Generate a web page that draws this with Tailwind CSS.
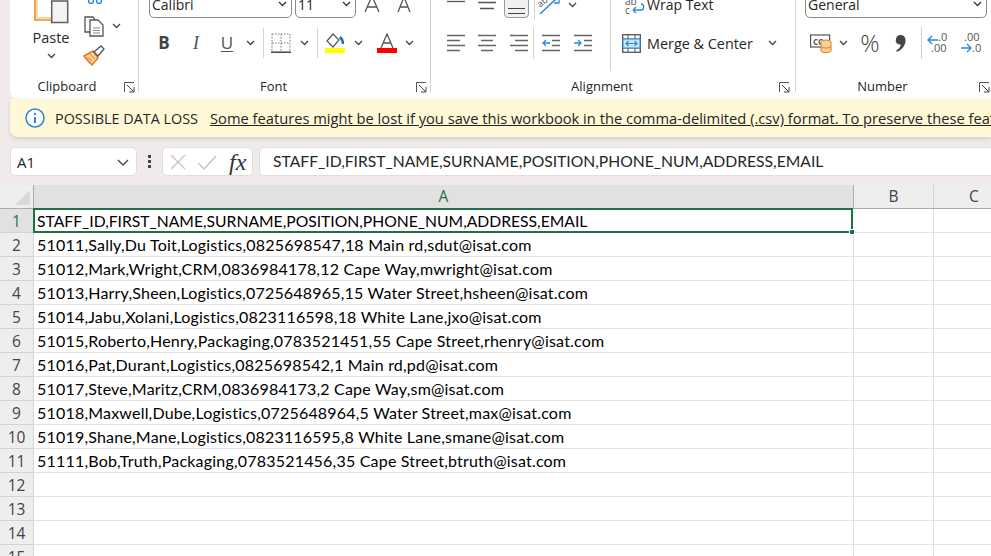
<!DOCTYPE html>
<html lang="en">
<head>
<meta charset="UTF-8">
<title>Excel</title>
<script src="https://cdn.jsdelivr.net/npm/@tailwindcss/browser@4"></script>
</head>
<body class="w-[991px] h-[556px] overflow-hidden bg-[#f0eaea] font-['Open_Sans',sans-serif] text-[#262626]">

<!-- Ribbon -->
<div class="ml-[10px] h-[99px] bg-white rounded-bl-[8px] flex overflow-hidden text-[13px]">

  <!-- Clipboard -->
  <section class="w-[129px] h-[92px] shrink-0 border-r border-[#d4d4d4] flex flex-col">
    <div class="h-[78px] shrink-0 flex">
      <div class="w-[34px] ml-[24px] flex flex-col items-center">
        <svg class="w-[36px] h-[24px] shrink-0" viewBox="0 0 36 24" fill="none"><path d="M2 0V20H18" stroke="#e8912d" stroke-width="1.6"/><path d="M4 0V18H18" stroke="#f9d9a8" stroke-width="2"/><rect x="18.7" y="1" width="16" height="21.5" fill="#f3f3f3" stroke="#5f5f5f" stroke-width="1.5"/></svg>
        <span class="mt-[5px] leading-[18px] text-[14.500px]">Paste</span>
        <svg class="w-[9px] h-[6px] mt-[6px]" viewBox="0 0 9 6" fill="none"><path d="M1 1l3.500 3.500L8 1" stroke="#444" stroke-width="1.300"/></svg>
      </div>
      <div class="ml-[15px] w-[44px] flex flex-col">
        <div class="h-[14px]">
          <svg class="w-[20px] h-[5px] ml-[2px]" viewBox="0 0 20 5" fill="none"><circle cx="6" cy="1" r="2.400" stroke="#2b88d8" stroke-width="1.400"/><circle cx="14" cy="1" r="2.400" stroke="#2b88d8" stroke-width="1.400"/></svg>
        </div>
        <div class="h-[24px] flex items-center">
          <svg class="w-[22px] h-[22px]" viewBox="0 0 22 22" fill="none"><path d="M7 17H2V2H10L12 5" stroke="#555" stroke-width="1.300"/><path d="M7 5H15L20 10V21H7Z" fill="#fff" stroke="#555" stroke-width="1.300"/><path d="M10 13h7M10 15.500h7M10 18h7" stroke="#888"/></svg>
          <svg class="w-[9px] h-[6px] ml-[7px]" viewBox="0 0 9 6" fill="none"><path d="M1 1l3.500 3.500L8 1" stroke="#444" stroke-width="1.300"/></svg>
        </div>
        <div class="mt-[7px]">
          <svg class="w-[22px] h-[21px]" viewBox="0 0 22 21" fill="none"><path d="M1 11L10 6L15 13L9 20C6 17 3 14 1 11Z" fill="#f9d3a5" stroke="#e07b16" stroke-width="1.500"/><path d="M4 12L9 16M7 9L12 14" stroke="#e07b16"/><path d="M11 7L18 1L21 4L15 11Z" fill="#fff" stroke="#555" stroke-width="1.300"/></svg>
        </div>
      </div>
    </div>
    <div class="flex items-center h-[18px] shrink-0 text-[13px]">
      <span class="flex-1 text-center">Clipboard</span>
      <svg class="w-[11px] h-[11px] mr-[3px]" viewBox="0 0 11 11" fill="none"><path d="M.5 10V.5H10" stroke="#555"/><path d="M3 3l7 7M10 5v5H5" stroke="#444"/></svg>
    </div>
  </section>

  <!-- Font -->
  <section class="w-[292px] h-[92px] shrink-0 border-r border-[#d4d4d4] flex flex-col">
    <div class="flex pl-[10px] h-[30px] shrink-0">
      <div class="w-[143px] h-[28px] -mt-[10px] border border-[#8a8a8a] rounded-[5px] flex items-center justify-between pl-[2px] pr-[4px] text-[14px]">Calibri
        <svg class="w-[9px] h-[6px]" viewBox="0 0 9 6" fill="none"><path d="M1 1l3.500 3.500L8 1" stroke="#333" stroke-width="1.300"/></svg>
      </div>
      <div class="w-[61px] h-[28px] -mt-[10px] ml-[3px] border border-[#8a8a8a] rounded-[5px] flex items-center justify-between pl-[2px] pr-[4px] text-[14px]">11
        <svg class="w-[9px] h-[6px]" viewBox="0 0 9 6" fill="none"><path d="M1 1l3.500 3.500L8 1" stroke="#333" stroke-width="1.300"/></svg>
      </div>
      <svg class="w-[16px] h-[12px] ml-[8px]" viewBox="0 0 16 12" fill="none"><path d="M1 12L8 -4L15 12M3.500 7H12.500" stroke="#555" stroke-width="1.300"/></svg>
      <svg class="w-[14px] h-[12px] ml-[17px]" viewBox="0 0 14 12" fill="none"><path d="M1 12L7 -3L13 12M3 7H11" stroke="#555" stroke-width="1.300"/></svg>
    </div>
    <div class="h-[26px] shrink-0 flex items-center">
      <b class="ml-[13px] w-[24px] text-center text-[17px] font-bold text-[#444]">B</b>
      <i class="ml-[8px] w-[24px] text-center text-[18px] font-['Liberation_Serif',serif] text-[#555]">I</i>
      <span class="ml-[7px] w-[24px] text-center text-[17px] underline underline-offset-[2px] text-[#555]">U</span>
      <svg class="w-[9px] h-[6px] ml-[7px] mr-[2px]" viewBox="0 0 9 6" fill="none"><path d="M1 1l3.500 3.500L8 1" stroke="#444" stroke-width="1.300"/></svg>
      <div class="ml-[6px] w-px h-[30px] bg-[#d4d4d4]"></div>
      <svg class="ml-[7px] w-[20px] h-[20px] mr-[1px]" viewBox="0 0 20 20" fill="none"><path d="M1 1H19M1 10H19M10 1V19M1 1V19M19 1V19" stroke="#777" stroke-dasharray="1.500 1.500"/><path d="M0 19.200H20" stroke="#444" stroke-width="1.500"/></svg>
      <svg class="w-[9px] h-[6px] ml-[8px] mr-[2px]" viewBox="0 0 9 6" fill="none"><path d="M1 1l3.500 3.500L8 1" stroke="#444" stroke-width="1.300"/></svg>
      <div class="ml-[6px] w-px h-[30px] bg-[#d4d4d4]"></div>
      <div class="ml-[7px] w-[20px] h-[21px] flex flex-col items-center">
        <svg class="w-[18px] h-[15px] shrink-0" viewBox="0 0 18 15" fill="none"><path d="M1 8L7 1L13 7L7 14Z" fill="#fff" stroke="#555" stroke-width="1.200"/><path d="M14 4C16 6 17 8 17 11" stroke="#1f6fc0" stroke-width="2.500"/></svg>
        <div class="w-[20px] h-[5px] shrink-0 bg-[#ffff00]"></div>
      </div>
      <svg class="w-[9px] h-[6px] ml-[9px]" viewBox="0 0 9 6" fill="none"><path d="M1 1l3.500 3.500L8 1" stroke="#444" stroke-width="1.300"/></svg>
      <div class="ml-[14px] w-[20px] h-[21px] flex flex-col items-center">
        <svg class="w-[14px] h-[15px] shrink-0" viewBox="0 0 14 15" fill="none"><path d="M1 15L7 1L13 15M3 10H11" stroke="#555" stroke-width="1.300"/></svg>
        <div class="w-[20px] h-[5px] shrink-0 bg-[#ff0000]"></div>
      </div>
      <svg class="w-[9px] h-[6px] ml-[8px]" viewBox="0 0 9 6" fill="none"><path d="M1 1l3.500 3.500L8 1" stroke="#444" stroke-width="1.300"/></svg>
    </div>
    <div class="flex items-center h-[18px] shrink-0 mt-[22px] text-[13px]">
      <span class="flex-1 text-center pr-[8px]">Font</span>
      <svg class="w-[11px] h-[11px] mr-[3px]" viewBox="0 0 11 11" fill="none"><path d="M.5 10V.5H10" stroke="#555"/><path d="M3 3l7 7M10 5v5H5" stroke="#444"/></svg>
    </div>
  </section>

  <!-- Alignment -->
  <section class="w-[365px] h-[92px] shrink-0 border-r border-[#d4d4d4] flex flex-col">
    <div class="h-[78px] shrink-0 flex items-start">
      <div class="w-[180px] h-[71px] border-r border-[#d4d4d4] flex flex-col">
        <div class="h-[30px] shrink-0 flex items-start">
          <svg class="ml-[16px] w-[18px] h-[10px]" viewBox="0 0 18 10" fill="none"><path d="M0 1.500H18" stroke="#555" stroke-width="1.300"/></svg>
          <svg class="ml-[13px] w-[18px] h-[12px]" viewBox="0 0 18 12" fill="none"><path d="M0 2.500H18M2 8.500H16" stroke="#555" stroke-width="1.300"/></svg>
          <div class="ml-[8px] w-[25px] h-[28px] -mt-[10px] bg-[#f0f0f0] border border-[#9a9a9a] rounded-[4px] flex flex-col items-center justify-end gap-[4px] pb-[3px]">
            <div class="w-[17px] h-px bg-[#444]"></div><div class="w-[17px] h-px bg-[#444]"></div>
          </div>
          <div class="ml-[5px] w-px h-[20px] bg-[#d4d4d4]"></div>
          <svg class="ml-[3px] w-[22px] h-[14px]" viewBox="0 0 22 14" fill="none"><path d="M2 14L20 -3" stroke="#2b88d8" stroke-width="1.500"/><path d="M16 3H21V-2" stroke="#2b88d8" stroke-width="1.300"/><text x="1" y="6" font-size="9" fill="#555" transform="rotate(-40 4 5)">ab</text></svg>
          <svg class="w-[9px] h-[6px] ml-[8px] mt-[2px]" viewBox="0 0 9 6" fill="none"><path d="M1 1l3.500 3.500L8 1" stroke="#444" stroke-width="1.300"/></svg>
        </div>
        <div class="h-[26px] shrink-0 flex items-center">
          <svg class="ml-[16px] w-[18px] h-[18px]" viewBox="0 0 18 18" fill="none"><path d="M0 1.500H18M0 6.500H13M0 11.500H18M0 16.500H13" stroke="#666" stroke-width="1.300"/></svg>
          <svg class="ml-[13px] w-[18px] h-[18px]" viewBox="0 0 18 18" fill="none"><path d="M0 1.500H18M3 6.500H15M0 11.500H18M3 16.500H15" stroke="#666" stroke-width="1.300"/></svg>
          <svg class="ml-[14px] w-[18px] h-[18px]" viewBox="0 0 18 18" fill="none"><path d="M0 1.500H18M5 6.500H18M0 11.500H18M5 16.500H18" stroke="#666" stroke-width="1.300"/></svg>
          <div class="ml-[5px] w-px h-[32px] bg-[#d4d4d4]"></div>
          <svg class="ml-[8px] w-[18px] h-[18px]" viewBox="0 0 18 18" fill="none"><path d="M0 1.500H18M0 16.500H18M10 6.500H18M10 11.500H18" stroke="#666" stroke-width="1.300"/><path d="M8 9H1M4 6L1 9L4 12" stroke="#2b88d8" stroke-width="1.300"/></svg>
          <svg class="ml-[14px] w-[18px] h-[18px]" viewBox="0 0 18 18" fill="none"><path d="M0 1.500H18M0 16.500H18M10 6.500H18M10 11.500H18" stroke="#666" stroke-width="1.300"/><path d="M0 9H7M4 6L7 9L4 12" stroke="#2b88d8" stroke-width="1.300"/></svg>
        </div>
      </div>
      <div class="flex flex-col">
        <div class="h-[30px] flex items-start leading-[12px]">
          <svg class="ml-[14px] w-[20px] h-[14px]" viewBox="0 0 20 14" fill="none"><text x="0" y="5" font-size="10" fill="#555">ab</text><text x="0" y="13.500" font-size="10" fill="#555">c</text><path d="M8 10H16C19.500 10 19.500 4 16 4M8 10L11 7M8 10L11 13" stroke="#2b88d8" stroke-width="1.300"/></svg>
          <span class="ml-[2px] -mt-[1px] text-[14px]">Wrap Text</span>
        </div>
        <div class="h-[26px] flex items-center">
          <svg class="ml-[11px] w-[19px] h-[19px]" viewBox="0 0 19 19" fill="none"><rect x=".7" y=".7" width="17.600" height="17.600" stroke="#555" stroke-width="1.300"/><path d="M.7 5H18.300M.7 14H18.300M6 .7V5M13 .7V5M6 14V18M13 14V18" stroke="#555"/><rect x="1" y="5" width="17" height="9" fill="#cde6f7" stroke="#2b88d8"/><path d="M4 9.500H15M6.500 7L4 9.500L6.500 12M12.500 7L15 9.500L12.500 12" stroke="#2b88d8" stroke-width="1.200"/></svg>
          <span class="ml-[6px] pt-[2px] text-[14.400px] whitespace-nowrap">Merge &amp; Center</span>
          <svg class="w-[9px] h-[6px] ml-[15px]" viewBox="0 0 9 6" fill="none"><path d="M1 1l3.500 3.500L8 1" stroke="#444" stroke-width="1.300"/></svg>
        </div>
      </div>
    </div>
    <div class="flex items-center h-[18px] shrink-0 text-[13px]">
      <span class="flex-1 text-center pr-[6px]">Alignment</span>
      <svg class="w-[11px] h-[11px] mr-[5px]" viewBox="0 0 11 11" fill="none"><path d="M.5 10V.5H10" stroke="#555"/><path d="M3 3l7 7M10 5v5H5" stroke="#444"/></svg>
    </div>
  </section>

  <!-- Number -->
  <section class="flex-1 h-[92px] flex flex-col">
    <div class="h-[30px] shrink-0 pl-[9px]">
      <div class="w-[182px] h-[28px] -mt-[10px] border border-[#8a8a8a] rounded-[5px] flex items-center justify-between pl-[2px] pr-[4px] text-[14px]">General
        <svg class="w-[9px] h-[6px]" viewBox="0 0 9 6" fill="none"><path d="M1 1l3.500 3.500L8 1" stroke="#333" stroke-width="1.300"/></svg>
      </div>
    </div>
    <div class="h-[26px] shrink-0 flex items-center">
      <svg class="ml-[14px] w-[22px] h-[19px]" viewBox="0 0 22 19" fill="none"><rect x=".6" y="1" width="19" height="12" fill="#fff" stroke="#555" stroke-width="1.200"/><text x="3" y="10.500" font-size="8" font-weight="700" fill="#555">CC</text><ellipse cx="16" cy="8" rx="5" ry="2" fill="#f8cfa0" stroke="#e07b16"/><path d="M11 8V17C11 19 21 19 21 17V8M11 12.500C11 14.500 21 14.500 21 12.500" fill="#f8cfa0" stroke="#e07b16"/></svg>
      <svg class="w-[9px] h-[6px] ml-[7px]" viewBox="0 0 9 6" fill="none"><path d="M1 1l3.500 3.500L8 1" stroke="#444" stroke-width="1.300"/></svg>
      <span class="ml-[11px] w-[22px] text-center text-[24px] font-light text-[#444] leading-[22px]">%</span>
      <svg class="ml-[14px] w-[12px] h-[19px]" viewBox="0 0 12 19" fill="#444"><path d="M2 2.500C4 0 10 0 10.500 5.500C11 11 7 16 2 18L1.200 16.500C4 15 5.500 13 5.800 10.500C3 11 .5 9 .8 6C1 4.500 1.400 3.300 2 2.500Z"/></svg>
      <div class="ml-[14px] w-px h-[32px] bg-[#d4d4d4]"></div>
      <svg class="ml-[5px] w-[22px] h-[22px]" viewBox="0 0 22 22" fill="none"><text x="11" y="9" font-size="11" fill="#555">.0</text><text x="4" y="20" font-size="11" fill="#555">.00</text><path d="M11 8H1M5 4L1 8L5 12" stroke="#2b88d8" stroke-width="1.400"/></svg>
      <svg class="ml-[11px] w-[22px] h-[22px]" viewBox="0 0 22 22" fill="none"><text x="4" y="9" font-size="11" fill="#555">.00</text><text x="12" y="20" font-size="11" fill="#555">.0</text><path d="M1 16H11M7 12L11 16L7 20" stroke="#2b88d8" stroke-width="1.400"/></svg>
    </div>
    <div class="flex items-center h-[18px] shrink-0 mt-[22px] text-[13px]">
      <span class="flex-1 text-center pr-[10px]">Number</span>
      <svg class="w-[11px] h-[11px] mr-[1px]" viewBox="0 0 11 11" fill="none"><path d="M.5 10V.5H10" stroke="#555"/><path d="M3 3l7 7M10 5v5H5" stroke="#444"/></svg>
    </div>
  </section>
</div>

<!-- Data loss message bar -->
<div class="ml-[10px] h-[38px] bg-[#fff8d6] rounded-bl-[8px] shadow-[0_2px_4px_rgba(0,0,0,0.12)] flex items-center pl-[15px] whitespace-nowrap overflow-hidden">
  <svg class="w-[20px] h-[20px] shrink-0" viewBox="0 0 20 20" fill="none"><circle cx="10" cy="10" r="9" fill="#fff" stroke="#2b88d8" stroke-width="1.500"/><circle cx="10" cy="6" r="1.200" fill="#2b88d8"/><path d="M10 9V15" stroke="#2b88d8" stroke-width="2"/></svg>
  <span class="ml-[10px] pt-px text-[14.400px]">POSSIBLE DATA LOSS</span>
  <span class="ml-[12px] underline text-[14.700px]">Some features might be lost if you save this workbook in the comma-delimited (.csv) format. To preserve these features, save it in an Excel file format.</span>
</div>

<!-- Formula bar -->
<div class="mt-[10px] h-[29px] flex pl-[10px] text-[15px]">
  <div class="w-[127px] bg-white border border-[#e2dede] rounded-[5px] flex items-center justify-between pl-[6px] pr-[7px] pt-px">A1
    <svg class="w-[12px] h-[7px]" viewBox="0 0 12 7" fill="none"><path d="M1 1l5 5 5-5" stroke="#444" stroke-width="1.300"/></svg>
  </div>
  <div class="w-[25px] flex flex-col items-center justify-center gap-[2px]">
    <div class="w-[3px] h-[3px] bg-[#444]"></div><div class="w-[3px] h-[3px] bg-[#444]"></div><div class="w-[3px] h-[3px] bg-[#444]"></div>
  </div>
  <div class="w-[91px] bg-white border border-[#e2dede] rounded-[5px] flex items-center pl-[7px]">
    <svg class="w-[16px] h-[16px]" viewBox="0 0 16 16" fill="none"><path d="M1 1L15 15M15 1L1 15" stroke="#c4c4c4" stroke-width="1.300"/></svg>
    <svg class="ml-[11px] w-[20px] h-[16px]" viewBox="0 0 20 16" fill="none"><path d="M1 9L7 15L19 2" stroke="#c4c4c4" stroke-width="1.300"/></svg>
    <i class="ml-[12px] text-[24px] leading-none font-['Liberation_Serif',serif] text-[#333]">fx</i>
  </div>
  <div class="ml-[6px] flex-1 bg-white border border-[#e2dede] border-r-0 rounded-l-[5px] flex items-center pl-[13px] pt-px font-['Lato',sans-serif] text-[15.700px]">STAFF_ID,FIRST_NAME,SURNAME,POSITION,PHONE_NUM,ADDRESS,EMAIL</div>
</div>

<!-- Sheet -->
<div class="mt-[9px] bg-white font-['Lato',sans-serif] text-[16px] tracking-[0.2px] text-black">
  <div class="h-[24px] flex bg-[#eeeeee] border-b border-[#ababab] font-['Open_Sans',sans-serif] tracking-normal text-[#444] text-[15.500px]">
    <div class="w-[34px] shrink-0 border-r border-[#ababab] flex items-end justify-end pr-[3px] pb-[3px]">
      <svg class="w-[15px] h-[15px]" viewBox="0 0 15 15"><path d="M15 0V15H0Z" fill="#d9d9d9"/></svg>
    </div>
    <div class="w-[820px] shrink-0 bg-[#e1e1e1] border-r border-[#ababab] text-center text-[#1f7246] leading-[23px]">A</div>
    <div class="w-[80px] shrink-0 border-r border-[#d4d4d4] text-center leading-[23px]">B</div>
    <div class="w-[80px] shrink-0 text-center leading-[23px]">C</div>
  </div>
  <div class="h-[24px] flex">
    <div class="w-[34px] bg-[#e1e1e1] border-r border-b border-[#d4d4d4] text-center text-[#1f7246] font-['Open_Sans',sans-serif] tracking-normal text-[15.500px] leading-[25px]">1</div>
    <div class="relative w-[820px] -ml-px border-2 border-[#1f7246] pl-[2px] leading-[22px] h-[25px] -mt-px whitespace-nowrap z-10 text-[15.700px] tracking-normal">STAFF_ID,FIRST_NAME,SURNAME,POSITION,PHONE_NUM,ADDRESS,EMAIL
      <div class="absolute -right-[4px] -bottom-[4px] w-[6px] h-[6px] bg-[#1f7246] border border-white"></div>
    </div>
    <div class="w-[81px] border-r border-b border-[#e1e1e1]"></div>
    <div class="flex-1 border-b border-[#e1e1e1]"></div>
  </div>
  <div class="h-[24px] flex"><div class="w-[34px] bg-[#eeeeee] border-r border-b border-[#d4d4d4] text-center text-[#444] font-['Open_Sans',sans-serif] tracking-normal text-[15.500px] leading-[25px]">2</div><div class="w-[820px] border-r border-b border-[#e1e1e1] pl-[3px] leading-[23px] whitespace-nowrap">51011,Sally,Du Toit,Logistics,0825698547,18 Main rd,sdut@isat.com</div><div class="w-[80px] border-r border-b border-[#e1e1e1]"></div><div class="flex-1 border-b border-[#e1e1e1]"></div></div>
  <div class="h-[24px] flex"><div class="w-[34px] bg-[#eeeeee] border-r border-b border-[#d4d4d4] text-center text-[#444] font-['Open_Sans',sans-serif] tracking-normal text-[15.500px] leading-[25px]">3</div><div class="w-[820px] border-r border-b border-[#e1e1e1] pl-[3px] leading-[23px] whitespace-nowrap">51012,Mark,Wright,CRM,0836984178,12 Cape Way,mwright@isat.com</div><div class="w-[80px] border-r border-b border-[#e1e1e1]"></div><div class="flex-1 border-b border-[#e1e1e1]"></div></div>
  <div class="h-[24px] flex"><div class="w-[34px] bg-[#eeeeee] border-r border-b border-[#d4d4d4] text-center text-[#444] font-['Open_Sans',sans-serif] tracking-normal text-[15.500px] leading-[25px]">4</div><div class="w-[820px] border-r border-b border-[#e1e1e1] pl-[3px] leading-[23px] whitespace-nowrap">51013,Harry,Sheen,Logistics,0725648965,15 Water Street,hsheen@isat.com</div><div class="w-[80px] border-r border-b border-[#e1e1e1]"></div><div class="flex-1 border-b border-[#e1e1e1]"></div></div>
  <div class="h-[24px] flex"><div class="w-[34px] bg-[#eeeeee] border-r border-b border-[#d4d4d4] text-center text-[#444] font-['Open_Sans',sans-serif] tracking-normal text-[15.500px] leading-[25px]">5</div><div class="w-[820px] border-r border-b border-[#e1e1e1] pl-[3px] leading-[23px] whitespace-nowrap">51014,Jabu,Xolani,Logistics,0823116598,18 White Lane,jxo@isat.com</div><div class="w-[80px] border-r border-b border-[#e1e1e1]"></div><div class="flex-1 border-b border-[#e1e1e1]"></div></div>
  <div class="h-[24px] flex"><div class="w-[34px] bg-[#eeeeee] border-r border-b border-[#d4d4d4] text-center text-[#444] font-['Open_Sans',sans-serif] tracking-normal text-[15.500px] leading-[25px]">6</div><div class="w-[820px] border-r border-b border-[#e1e1e1] pl-[3px] leading-[23px] whitespace-nowrap">51015,Roberto,Henry,Packaging,0783521451,55 Cape Street,rhenry@isat.com</div><div class="w-[80px] border-r border-b border-[#e1e1e1]"></div><div class="flex-1 border-b border-[#e1e1e1]"></div></div>
  <div class="h-[24px] flex"><div class="w-[34px] bg-[#eeeeee] border-r border-b border-[#d4d4d4] text-center text-[#444] font-['Open_Sans',sans-serif] tracking-normal text-[15.500px] leading-[25px]">7</div><div class="w-[820px] border-r border-b border-[#e1e1e1] pl-[3px] leading-[23px] whitespace-nowrap">51016,Pat,Durant,Logistics,0825698542,1 Main rd,pd@isat.com</div><div class="w-[80px] border-r border-b border-[#e1e1e1]"></div><div class="flex-1 border-b border-[#e1e1e1]"></div></div>
  <div class="h-[24px] flex"><div class="w-[34px] bg-[#eeeeee] border-r border-b border-[#d4d4d4] text-center text-[#444] font-['Open_Sans',sans-serif] tracking-normal text-[15.500px] leading-[25px]">8</div><div class="w-[820px] border-r border-b border-[#e1e1e1] pl-[3px] leading-[23px] whitespace-nowrap">51017,Steve,Maritz,CRM,0836984173,2 Cape Way,sm@isat.com</div><div class="w-[80px] border-r border-b border-[#e1e1e1]"></div><div class="flex-1 border-b border-[#e1e1e1]"></div></div>
  <div class="h-[24px] flex"><div class="w-[34px] bg-[#eeeeee] border-r border-b border-[#d4d4d4] text-center text-[#444] font-['Open_Sans',sans-serif] tracking-normal text-[15.500px] leading-[25px]">9</div><div class="w-[820px] border-r border-b border-[#e1e1e1] pl-[3px] leading-[23px] whitespace-nowrap">51018,Maxwell,Dube,Logistics,0725648964,5 Water Street,max@isat.com</div><div class="w-[80px] border-r border-b border-[#e1e1e1]"></div><div class="flex-1 border-b border-[#e1e1e1]"></div></div>
  <div class="h-[24px] flex"><div class="w-[34px] bg-[#eeeeee] border-r border-b border-[#d4d4d4] text-center text-[#444] font-['Open_Sans',sans-serif] tracking-normal text-[15.500px] leading-[25px]">10</div><div class="w-[820px] border-r border-b border-[#e1e1e1] pl-[3px] leading-[23px] whitespace-nowrap">51019,Shane,Mane,Logistics,0823116595,8 White Lane,smane@isat.com</div><div class="w-[80px] border-r border-b border-[#e1e1e1]"></div><div class="flex-1 border-b border-[#e1e1e1]"></div></div>
  <div class="h-[24px] flex"><div class="w-[34px] bg-[#eeeeee] border-r border-b border-[#d4d4d4] text-center text-[#444] font-['Open_Sans',sans-serif] tracking-normal text-[15.500px] leading-[25px]">11</div><div class="w-[820px] border-r border-b border-[#e1e1e1] pl-[3px] leading-[23px] whitespace-nowrap">51111,Bob,Truth,Packaging,0783521456,35 Cape Street,btruth@isat.com</div><div class="w-[80px] border-r border-b border-[#e1e1e1]"></div><div class="flex-1 border-b border-[#e1e1e1]"></div></div>
  <div class="h-[24px] flex"><div class="w-[34px] bg-[#eeeeee] border-r border-b border-[#d4d4d4] text-center text-[#444] font-['Open_Sans',sans-serif] tracking-normal text-[15.500px] leading-[25px]">12</div><div class="w-[820px] border-r border-b border-[#e1e1e1]"></div><div class="w-[80px] border-r border-b border-[#e1e1e1]"></div><div class="flex-1 border-b border-[#e1e1e1]"></div></div>
  <div class="h-[24px] flex"><div class="w-[34px] bg-[#eeeeee] border-r border-b border-[#d4d4d4] text-center text-[#444] font-['Open_Sans',sans-serif] tracking-normal text-[15.500px] leading-[25px]">13</div><div class="w-[820px] border-r border-b border-[#e1e1e1]"></div><div class="w-[80px] border-r border-b border-[#e1e1e1]"></div><div class="flex-1 border-b border-[#e1e1e1]"></div></div>
  <div class="h-[24px] flex"><div class="w-[34px] bg-[#eeeeee] border-r border-b border-[#d4d4d4] text-center text-[#444] font-['Open_Sans',sans-serif] tracking-normal text-[15.500px] leading-[25px]">14</div><div class="w-[820px] border-r border-b border-[#e1e1e1]"></div><div class="w-[80px] border-r border-b border-[#e1e1e1]"></div><div class="flex-1 border-b border-[#e1e1e1]"></div></div>
  <div class="h-[24px] flex"><div class="w-[34px] bg-[#eeeeee] border-r border-b border-[#d4d4d4] text-center text-[#444] font-['Open_Sans',sans-serif] tracking-normal text-[15.500px] leading-[25px]">15</div><div class="w-[820px] border-r border-b border-[#e1e1e1]"></div><div class="w-[80px] border-r border-b border-[#e1e1e1]"></div><div class="flex-1 border-b border-[#e1e1e1]"></div></div>
</div>
</body>
</html>
